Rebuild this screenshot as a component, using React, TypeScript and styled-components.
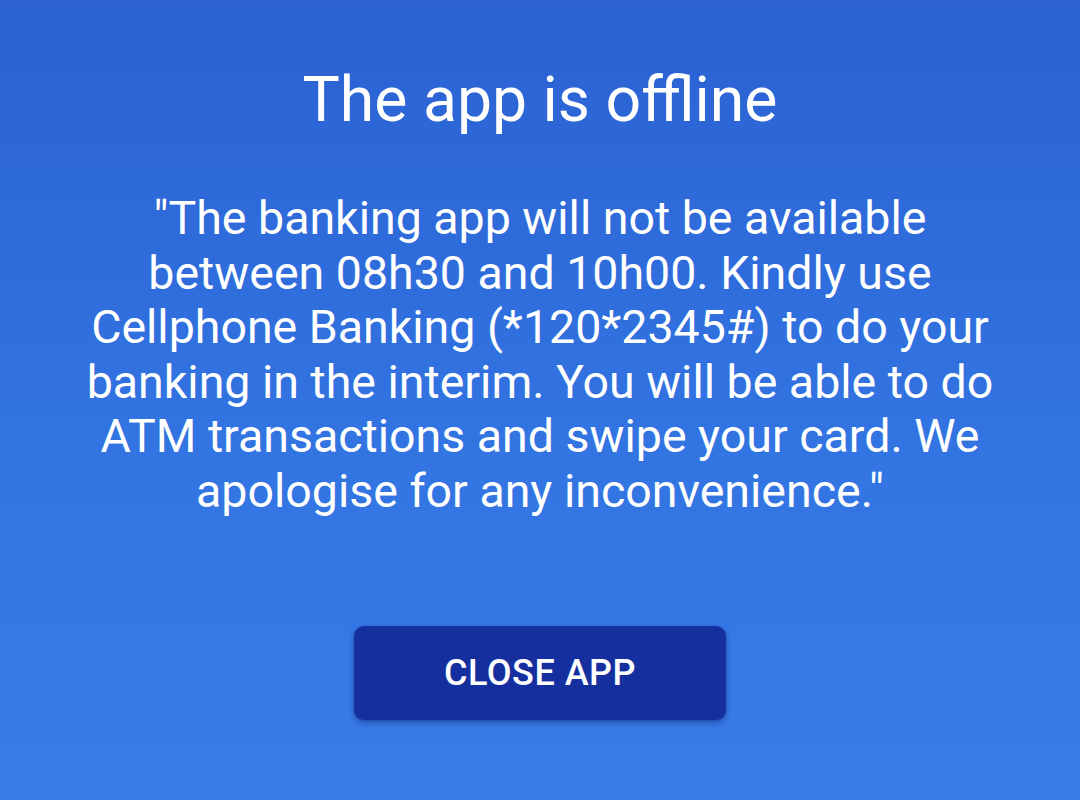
import React from 'react';
import styled, { createGlobalStyle } from 'styled-components';

const GlobalStyle = createGlobalStyle`
    html, body {
        margin: 0;
        padding: 0;
        height: 100%;
    }

    body {
        font-family: Roboto, "Noto Sans", Arial, sans-serif;
        -webkit-font-smoothing: antialiased;
    }

    #root {
        height: 100%;
    }
`;

const OfflineScreen = styled.div`
    display: flex;
    flex-direction: column;
    align-items: center;
    box-sizing: border-box;
    width: 100%;
    min-height: 800px;
    padding: 62px 40px 0;
    background: linear-gradient(180deg, #2b61d2 0%, #3274e2 55%, #397be9 100%);
    color: #ffffff;
`;

const Title = styled.h1`
    margin: 0;
    font-size: 62.5px;
    font-weight: 400;
    line-height: 76px;
    text-align: center;
`;

const Message = styled.p`
    max-width: 950px;
    margin: 53px 0 0;
    font-size: 46.5px;
    font-weight: 400;
    line-height: 54.6px;
    text-align: center;
`;

const CloseButton = styled.button`
    margin-top: 107px;
    width: 372px;
    height: 94px;
    border: none;
    border-radius: 10px;
    background-color: #152f9f;
    color: #ffffff;
    font-family: Roboto, "Noto Sans", Arial, sans-serif;
    font-size: 36px;
    font-weight: 500;
    letter-spacing: 0.5px;
    text-transform: uppercase;
    box-shadow: 0 3px 6px rgba(10, 30, 90, 0.35), 0 1px 3px rgba(10, 30, 90, 0.25);
    cursor: pointer;
`;

export default function App() {
    return (
        <>
            <GlobalStyle />
            <OfflineScreen>
                <Title>The app is offline</Title>
                <Message>
                    "The banking app will not be available between 08h30 and 10h00. Kindly use
                    Cellphone Banking (*120*2345#) to do your banking in the interim. You will be
                    able to do ATM transactions and swipe your card. We apologise for any
                    inconvenience."
                </Message>
                <CloseButton>Close app</CloseButton>
            </OfflineScreen>
        </>
    );
}
